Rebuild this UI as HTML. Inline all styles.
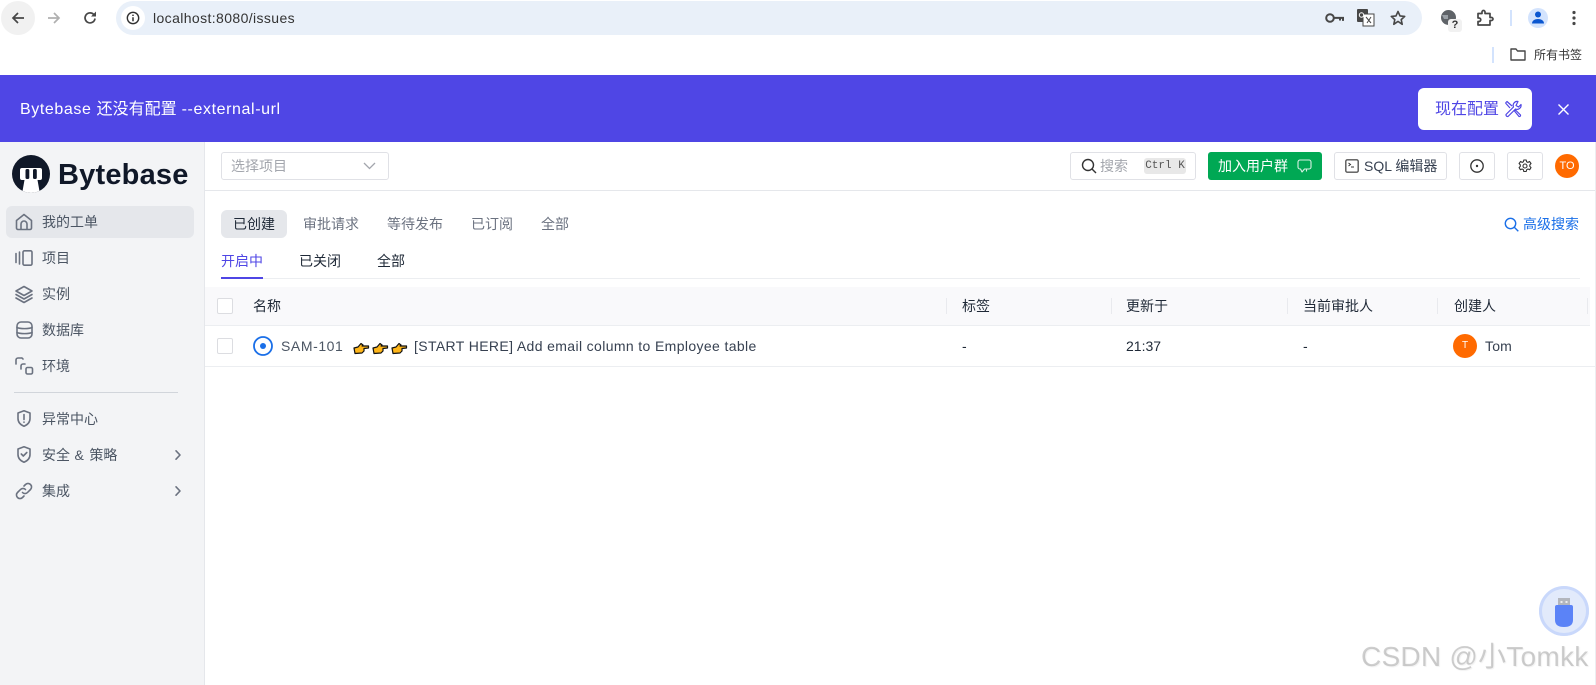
<!DOCTYPE html>
<html lang="zh">
<head>
<meta charset="utf-8">
<title>Bytebase</title>
<style>
html,body{margin:0;padding:0;width:1596px;height:685px;overflow:hidden;background:#fff}
body{position:relative;font-family:"Liberation Sans","Noto Sans CJK SC",sans-serif;font-size:14px;color:#1f2937}
.a{position:absolute}
.t{position:absolute;white-space:nowrap;line-height:20px}
svg{position:absolute;overflow:visible}
.b{position:absolute;box-sizing:border-box;border:1px solid #e0e1e6;border-radius:3px;background:#fff}
.nav{color:#4b5563}
.i{fill:none;stroke:#6b7280;stroke-width:1.6;stroke-linecap:round;stroke-linejoin:round}
.sep{position:absolute;width:1px;height:16px;top:298px;background:#e9eaee}
.cb{position:absolute;box-sizing:border-box;width:16px;height:16px;left:217px;border:1px solid #dcdde1;border-radius:2px;background:#fff}
</style>
</head>
<body>
<!-- browser chrome -->
<div class="a" style="left:1px;top:1px;width:34px;height:34px;border-radius:17px;background:#f1f1f1"></div>
<svg style="left:10px;top:10px" width="16" height="16" viewBox="0 0 16 16"><path d="M14 8H3M8 3L3 8l5 5" fill="none" stroke="#474747" stroke-width="1.7"/></svg>
<svg style="left:46px;top:10px" width="16" height="16" viewBox="0 0 16 16"><path d="M2 8h11M8 3l5 5-5 5" fill="none" stroke="#b0b0b0" stroke-width="1.7"/></svg>
<svg style="left:82px;top:10px" width="16" height="16" viewBox="0 0 16 16"><path d="M13 8.500A5 5 0 1 1 11.500 4.300L13.500 6" fill="none" stroke="#474747" stroke-width="1.700"/><path d="M14 1.500V6.500H9z" fill="#474747"/></svg>
<div class="a" style="left:116px;top:1px;width:1306px;height:34px;border-radius:17px;background:#e9f0f9"></div>
<div class="a" style="left:121px;top:6px;width:24px;height:24px;border-radius:12px;background:#fff"></div>
<svg style="left:126px;top:11px" width="14" height="14" viewBox="0 0 14 14"><circle cx="7" cy="7" r="5.700" fill="none" stroke="#303030" stroke-width="1.400"/><path d="M7 6.200v4M7 3.600v1.400" stroke="#303030" stroke-width="1.500"/></svg>
<div class="t" style="left:153px;top:8px;color:#333;font-size:14px;letter-spacing:.39px">localhost:8080/issues</div>
<svg style="left:1325px;top:12px" width="19" height="12" viewBox="0 0 19 12"><circle cx="5" cy="6" r="3.800" fill="none" stroke="#474747" stroke-width="2"/><path d="M9 5.900h9v3M15 6v2.500" fill="none" stroke="#474747" stroke-width="2"/></svg>
<svg style="left:1357px;top:9px" width="18" height="18" viewBox="0 0 18 18"><rect x="0" y="0" width="11" height="13" rx="1" fill="#474747"/><rect x="6" y="5" width="11" height="12" fill="#fff" stroke="#474747"/><path d="M9 8l5 6M14 8l-4 6" stroke="#474747"/><circle cx="4.500" cy="6" r="2.200" fill="none" stroke="#fff"/></svg>
<svg style="left:1390px;top:10px" width="16" height="16" viewBox="0 0 16 16"><path d="M8 1.500l2 4.400 4.700.5-3.500 3.200 1 4.700L8 11.400l-4.200 2.900 1-4.700L1.300 6.400 6 5.900z" fill="none" stroke="#474747" stroke-width="1.600" stroke-linejoin="round"/></svg>
<svg style="left:1440px;top:9px" width="17" height="17" viewBox="0 0 17 17"><circle cx="8.500" cy="8.500" r="7.500" fill="#5f6368"/><path d="M2 6h6v4H4z" fill="#9aa0a6"/></svg>
<div class="a" style="left:1448px;top:19px;width:14px;height:13px;border-radius:3px;background:#f1f1f1;font-size:11px;font-weight:bold;line-height:13px;text-align:center;color:#333">?</div>
<svg style="left:1477px;top:10px" width="17" height="16" viewBox="0 0 17 16"><path d="M1 3.500h4V2a1.500 1.500 0 0 1 3 0v1.500h5v4h1.500a1.500 1.500 0 0 1 0 3H13v4.500H1v-3.500h1a1.700 1.700 0 0 0 0-3.500H1z" fill="none" stroke="#474747" stroke-width="1.700" stroke-linejoin="round"/></svg>
<div class="a" style="left:1510px;top:10px;width:2px;height:16px;background:#d3e3fd"></div>
<div class="a" style="left:1528px;top:8px;width:20px;height:20px;border-radius:10px;background:#d3e3fd"></div>
<svg style="left:1532px;top:11px" width="12" height="13" viewBox="0 0 12 13"><circle cx="6" cy="3.500" r="3" fill="#0b57d0"/><path d="M0 12.500c0-3 3-4.500 6-4.500s6 1.500 6 4.500z" fill="#0b57d0"/></svg>
<svg style="left:1572px;top:10px" width="4" height="16" viewBox="0 0 4 16"><circle cx="2" cy="2.500" r="1.600" fill="#474747"/><circle cx="2" cy="8" r="1.600" fill="#474747"/><circle cx="2" cy="13.500" r="1.600" fill="#474747"/></svg>
<div class="a" style="left:1492px;top:47px;width:2px;height:16px;background:#d3e3fd"></div>
<svg style="left:1510px;top:48px" width="16" height="13" viewBox="0 0 16 13"><path d="M1 1h5l1.500 2H15v9H1z" fill="none" stroke="#474747" stroke-width="1.400" stroke-linejoin="round"/></svg>
<div class="t" style="left:1534px;top:45px;font-size:12px;color:#333">所有书签</div>

<!-- banner -->
<div class="a" style="left:0;top:75px;width:1596px;height:67px;background:#4f46e5"></div>
<div class="t" style="left:20px;top:100px;font-size:16px;color:#fff;letter-spacing:.6px">Bytebase <span style="letter-spacing:0">还没有配置</span> --external-url</div>
<div class="a" style="left:1418px;top:88px;width:114px;height:42px;border-radius:6px;background:#fff"></div>
<div class="t" style="left:1435px;top:100px;font-size:16px;color:#4f46e5">现在配置</div>
<svg style="left:1504px;top:100px" width="18" height="18" viewBox="0 0 18 18"><path d="M14 1.500a4 4 0 0 0-4.500 5.500L2 14.500a1.700 1.700 0 0 0 2 2L11.500 9a4 4 0 0 0 5.500-4.500L14.500 7 12 5.500z" fill="none" stroke="#4f46e5" stroke-width="1.200" stroke-linejoin="round"/><path d="M1.500 3L3 1.500l5 4.500M6 8L1.500 3M10.500 11l1-1 5 5a1.200 1.200 0 0 1-1.500 1.500z" fill="none" stroke="#4f46e5" stroke-width="1.200" stroke-linejoin="round"/></svg>
<svg style="left:1558px;top:104px" width="11" height="11" viewBox="0 0 11 11"><path d="M.5.500l10 10M10.500.500l-10 10" stroke="#fff" stroke-width="1.400"/></svg>

<!-- sidebar -->
<div class="a" style="left:0;top:142px;width:205px;height:543px;background:#f3f4f6;border-right:1px solid #e5e7eb;box-sizing:border-box"></div>
<svg style="left:12px;top:155px" width="38" height="38" viewBox="0 0 38 38"><defs><clipPath id="lc"><circle cx="19" cy="19" r="19"/></clipPath></defs><circle cx="19" cy="19" r="19" fill="#101828"/><path clip-path="url(#lc)" d="M8 15Q8 13 10 13H28Q30 13 30 15V23Q30 25 28 25H25.500L28 39H10L12.500 25H10Q8 25 8 23z" fill="#fff"/><rect x="13.500" y="14" width="3.800" height="10" rx="1.500" fill="#101828"/><rect x="21" y="14" width="3.800" height="10" rx="1.500" fill="#101828"/></svg>
<div class="t" style="left:58px;top:156px;font-size:29px;line-height:38px;font-weight:bold;color:#101828;letter-spacing:.2px">Bytebase</div>

<div class="a" style="left:6px;top:206px;width:188px;height:32px;border-radius:6px;background:#e5e7eb"></div>
<svg style="left:15px;top:213px" width="18" height="18" viewBox="0 0 18 18"><path class="i" d="M1.500 7.500L9 1.500l7.500 6V15a1.500 1.500 0 0 1-1.500 1.500H3A1.500 1.500 0 0 1 1.500 15zM6 16.500V11a3 3 0 0 1 6 0v5.500"/></svg>
<div class="t nav" style="left:42px;top:212px">我的工单</div>
<svg style="left:15px;top:250px" width="18" height="16" viewBox="0 0 18 16"><rect class="i" x="8" y=".8" width="9" height="14.400" rx="1.500"/><path class="i" d="M1 3.500v9M4.500 2v12"/></svg>
<div class="t nav" style="left:42px;top:248px">项目</div>
<svg style="left:15px;top:285px" width="18" height="18" viewBox="0 0 18 18"><path class="i" d="M9 1.500L17 6 9 10.500 1 6zM1 9.500l8 4.500 8-4.500M1 13l8 4.500 8-4.500"/></svg>
<div class="t nav" style="left:42px;top:284px">实例</div>
<svg style="left:16px;top:321px" width="17" height="18" viewBox="0 0 17 18"><rect class="i" x="1" y="1" width="15" height="16" rx="4"/><path class="i" d="M1 6.500c3 1.500 12 1.500 15 0M1 11.500c3 1.500 12 1.500 15 0"/></svg>
<div class="t nav" style="left:42px;top:320px">数据库</div>
<svg style="left:15px;top:357px" width="18" height="18" viewBox="0 0 18 18"><path class="i" d="M1 7V3a2 2 0 0 1 2-2h3a2 2 0 0 1 2 1M6 12V9a2 2 0 0 1 2-2h2"/><rect class="i" x="11" y="10.500" width="6.500" height="6.500" rx="1.500"/></svg>
<div class="t nav" style="left:42px;top:356px">环境</div>
<div class="a" style="left:14px;top:392px;width:164px;height:1px;background:#d1d5db"></div>
<svg style="left:17px;top:410px" width="14" height="17" viewBox="0 0 14 17"><path class="i" d="M7 .8l6 2.200v5.500c0 4-3 6.500-6 7.700-3-1.200-6-3.700-6-7.700V3z"/><path class="i" d="M7 4.500v5M7 12v.3"/></svg>
<div class="t nav" style="left:42px;top:409px">异常中心</div>
<svg style="left:17px;top:446px" width="14" height="17" viewBox="0 0 14 17"><path class="i" d="M7 .8l6 2.200v5.500c0 4-3 6.500-6 7.700-3-1.200-6-3.700-6-7.700V3z"/><path class="i" d="M4.300 8l2 2 3.500-3.500"/></svg>
<div class="t nav" style="left:42px;top:445px;word-spacing:.6px">安全 <span style="letter-spacing:1px">&amp;</span> 策略</div>
<svg style="left:175px;top:450px" width="6" height="10" viewBox="0 0 6 10"><path class="i" d="M1 .8L5 5 1 9.200" stroke-width="1.300"/></svg>
<svg style="left:15px;top:482px" width="18" height="18" viewBox="0 0 18 18"><path class="i" d="M7.500 10.500a3.500 3.500 0 0 0 5 0l3-3a3.500 3.500 0 0 0-5-5L9 4M10.500 7.500a3.500 3.500 0 0 0-5 0l-3 3a3.500 3.500 0 0 0 5 5L9 14"/></svg>
<div class="t nav" style="left:42px;top:481px">集成</div>
<svg style="left:175px;top:486px" width="6" height="10" viewBox="0 0 6 10"><path class="i" d="M1 .8L5 5 1 9.200" stroke-width="1.300"/></svg>

<!-- top nav -->
<div class="a" style="left:205px;top:190px;width:1391px;height:1px;background:#e5e7eb"></div>
<div class="b" style="left:221px;top:152px;width:168px;height:28px"></div>
<div class="t" style="left:231px;top:156px;color:#a3a6ad">选择项目</div>
<svg style="left:363px;top:162px" width="13" height="8" viewBox="0 0 13 8"><path d="M1 1l5.500 5.500L12 1" fill="none" stroke="#a3a6ad" stroke-width="1.300"/></svg>

<div class="b" style="left:1070px;top:152px;width:126px;height:28px"></div>
<svg style="left:1081px;top:158px" width="16" height="16" viewBox="0 0 16 16"><circle cx="7" cy="7" r="5.500" fill="none" stroke="#333" stroke-width="1.400"/><path d="M11 11l4 4" stroke="#333" stroke-width="1.400"/></svg>
<div class="t" style="left:1100px;top:156px;color:#a3a6ad">搜索</div>
<div class="t" style="left:1144px;top:158px;width:42px;height:16px;border-radius:3px;background:#e8e8e8;font:11px/17px 'Liberation Mono',monospace;color:#555;text-align:center">Ctrl K</div>
<div class="a" style="left:1208px;top:152px;width:114px;height:28px;border-radius:3px;background:#00a854"></div>
<div class="t" style="left:1218px;top:156px;color:#fff">加入用户群</div>
<svg style="left:1297px;top:159px" width="15" height="14" viewBox="0 0 15 14"><path d="M3.500 10H3a2 2 0 0 1-2-2V3a2 2 0 0 1 2-2h9a2 2 0 0 1 2 2v5a2 2 0 0 1-2 2H7.500L5 13zM9.500 10v2.500" fill="none" stroke="#fff" stroke-opacity=".85" stroke-width="1.100" stroke-linejoin="round"/></svg>
<div class="b" style="left:1334px;top:152px;width:113px;height:28px"></div>
<svg style="left:1345px;top:159px" width="14" height="14" viewBox="0 0 14 14"><rect x=".8" y=".8" width="12.400" height="12.400" rx="1.500" fill="none" stroke="#555" stroke-width="1.400"/><path d="M3.500 4l2 1.500-2 1.500M6 8h3" fill="none" stroke="#333"/></svg>
<div class="t" style="left:1364px;top:156px;color:#374151">SQL 编辑器</div>
<div class="b" style="left:1459px;top:152px;width:36px;height:28px"></div>
<svg style="left:1470px;top:159px" width="14" height="14" viewBox="0 0 14 14"><circle cx="7" cy="7" r="6.200" fill="none" stroke="#333" stroke-width="1.300"/><circle cx="7" cy="7" r="1.200" fill="#333"/></svg>
<div class="b" style="left:1507px;top:152px;width:36px;height:28px"></div>
<svg style="left:1518px;top:159px" width="14" height="14" viewBox="0 0 14 14"><path d="M5.800 1h2.400l.4 1.800 1.300.6 1.600-.9 1.500 2-1.200 1.400v1.400l1.200 1.300-1.300 2.100-1.700-.7-1.300.7-.5 1.800H5.800l-.4-1.800-1.300-.7-1.700.7-1.300-2.100 1.200-1.300V5.900L1.100 4.500l1.500-2 1.600.9 1.200-.6z" fill="none" stroke="#333" stroke-width="1.100" stroke-linejoin="round"/><circle cx="7" cy="7" r="2" fill="none" stroke="#333" stroke-width="1.100"/></svg>
<div class="a" style="left:1555px;top:154px;width:24px;height:24px;border-radius:12px;background:#ff6a00;color:#fff;font-size:11px;line-height:24px;text-align:center">TO</div>
<div class="a" style="left:1595px;top:142px;width:1px;height:543px;background:#eceef1"></div>

<!-- tabs -->
<div class="a" style="left:221px;top:210px;width:66px;height:28px;border-radius:6px;background:#e5e7eb"></div>
<div class="t" style="left:233px;top:214px;color:#1f2937">已创建</div>
<div class="t" style="left:303px;top:214px;color:#6b7280">审批请求</div>
<div class="t" style="left:387px;top:214px;color:#6b7280">等待发布</div>
<div class="t" style="left:471px;top:214px;color:#6b7280">已订阅</div>
<div class="t" style="left:541px;top:214px;color:#6b7280">全部</div>
<svg style="left:1504px;top:217px" width="15" height="15" viewBox="0 0 15 15"><circle cx="6.500" cy="6.500" r="5.200" fill="none" stroke="#1a6fe8" stroke-width="1.400"/><path d="M10.300 10.300l4 4" stroke="#1a6fe8" stroke-width="1.400"/></svg>
<div class="t" style="left:1523px;top:214px;color:#1a6fe8">高级搜索</div>
<div class="t" style="left:221px;top:251px;color:#4f46e5">开启中</div>
<div class="t" style="left:299px;top:251px;color:#1f2937">已关闭</div>
<div class="t" style="left:377px;top:251px;color:#1f2937">全部</div>
<div class="a" style="left:221px;top:278px;width:1359px;height:1px;background:#eceef1"></div>
<div class="a" style="left:221px;top:277px;width:42px;height:2px;background:#4f46e5"></div>

<!-- table -->
<div class="a" style="left:205px;top:287px;width:1385px;height:38px;background:#f9f9fb"></div>
<div class="a" style="left:205px;top:325px;width:1385px;height:1px;background:#eceef1"></div>
<div class="a" style="left:205px;top:366px;width:1390px;height:1px;background:#eceef1"></div>
<div class="cb" style="top:298px"></div>
<div class="t" style="left:253px;top:296px">名称</div>
<div class="sep" style="left:946px"></div>
<div class="t" style="left:962px;top:296px">标签</div>
<div class="sep" style="left:1111px"></div>
<div class="t" style="left:1126px;top:296px">更新于</div>
<div class="sep" style="left:1287px"></div>
<div class="t" style="left:1303px;top:296px">当前审批人</div>
<div class="sep" style="left:1437px"></div>
<div class="t" style="left:1454px;top:296px">创建人</div>
<div class="sep" style="left:1587px"></div>

<div class="cb" style="top:338px"></div>
<svg style="left:253px;top:336px" width="20" height="20" viewBox="0 0 20 20"><circle cx="10" cy="10" r="9" fill="none" stroke="#1a6fe8" stroke-width="1.800"/><circle cx="10" cy="10" r="3" fill="#1a6fe8"/></svg>
<div class="t" style="left:281px;top:336px;color:#4b5563;letter-spacing:.58px">SAM-101</div>
<svg style="left:353px;top:342px" width="56" height="13" viewBox="0 0 56 13"><g fill="#ffb619" stroke="#111" stroke-width="1.200" stroke-linejoin="round"><path id="h1" d="M1 6L5 5 8 1.500 10 3 9 4H15.500V6L11 6.500V9L9 11 2 11.500z"/><path transform="translate(19 0)" d="M1 6L5 5 8 1.500 10 3 9 4H15.500V6L11 6.500V9L9 11 2 11.500z"/><path transform="translate(38 0)" d="M1 6L5 5 8 1.500 10 3 9 4H15.500V6L11 6.500V9L9 11 2 11.500z"/></g></svg>
<div class="t" style="left:414px;top:336px;color:#374151;letter-spacing:.37px">[START HERE] Add email column to Employee table</div>
<div class="t" style="left:962px;top:336px">-</div>
<div class="t" style="left:1126px;top:336px">21:37</div>
<div class="t" style="left:1303px;top:336px">-</div>
<div class="a" style="left:1453px;top:334px;width:24px;height:24px;border-radius:12px;background:#ff6a00;color:#fff;font-size:10px;line-height:24px;text-align:center">T</div>
<div class="t" style="left:1485px;top:336px;color:#374151;letter-spacing:.2px">Tom</div>

<!-- floating -->
<div class="a" style="left:1539px;top:586px;width:50px;height:50px;border-radius:25px;background:#e2eafb;box-shadow:inset 0 0 0 3px #c9d8fb"></div>
<svg style="left:1555px;top:598px" width="18" height="30" viewBox="0 0 18 30"><rect x="3" y="0" width="12" height="8" fill="#b3b6bd"/><rect x="5.500" y="3" width="2" height="2" fill="#eee"/><rect x="10.500" y="3" width="2" height="2" fill="#eee"/><path d="M0 9q0-2 2-2h14q2 0 2 2v13q0 7-9 7t-9-7z" fill="#5b83f7"/></svg>
<div class="t" style="left:1361px;top:642px;font-size:28px;line-height:30px;letter-spacing:.25px;color:rgba(150,150,150,.45);text-shadow:1px 1px 1px rgba(0,0,0,.06)">CSDN @小Tomkk</div>
</body>
</html>
